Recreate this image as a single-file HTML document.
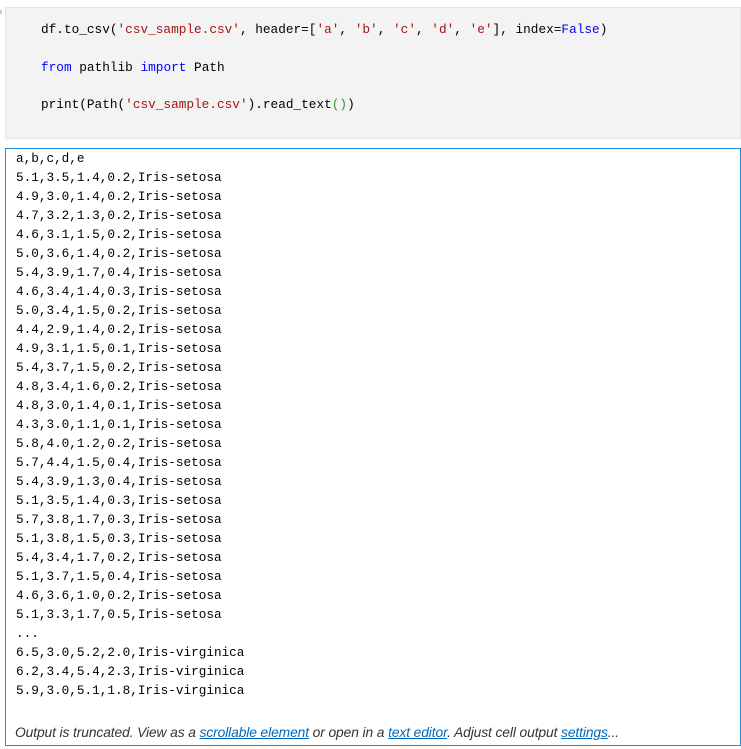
<!DOCTYPE html>
<html><head><style>
body{margin:0;background:#fff;width:741px;height:749px;overflow:hidden;position:relative;font-family:"Liberation Sans",sans-serif}
.cell{position:absolute;left:5px;top:7px;width:736px;height:132px;background:#f3f3f3;border:1px solid #e5e5e5;box-sizing:border-box}
.code{position:absolute;left:35px;font-family:"Liberation Mono",monospace;font-size:12.75px;color:#000;white-space:pre;line-height:16px}
.s{color:#a31515}.k{color:#0000ff}.p{color:#319331}
.out{position:absolute;left:5px;top:148px;width:736px;height:598px;border:1px solid #1a8fe0;box-sizing:border-box}
.txt{position:absolute;left:10px;top:0px;font-family:"Liberation Mono",monospace;font-size:12.7px;line-height:19px;white-space:pre;color:#000}
.foot{position:absolute;left:9px;top:576px;font-size:13.8px;font-style:italic;color:#333;white-space:nowrap;letter-spacing:-0.1px}
.foot a{color:#0067b8;text-decoration:underline}
.mark{position:absolute;left:0;top:10px;width:2px;height:4px;background:#ccc}
</style></head><body>
<div class="mark"></div>
<div class="cell">
<div class="code" style="top:14px">df.to_csv(<span class="s">'csv_sample.csv'</span>, header=[<span class="s">'a'</span>, <span class="s">'b'</span>, <span class="s">'c'</span>, <span class="s">'d'</span>, <span class="s">'e'</span>], index=<span class="k">False</span>)</div>
<div class="code" style="top:52px"><span class="k">from</span> pathlib <span class="k">import</span> Path</div>
<div class="code" style="top:89px">print(Path(<span class="s">'csv_sample.csv'</span>).read_text<span class="p">()</span>)</div>
</div>
<div class="out">
<div class="txt">a,b,c,d,e
5.1,3.5,1.4,0.2,Iris-setosa
4.9,3.0,1.4,0.2,Iris-setosa
4.7,3.2,1.3,0.2,Iris-setosa
4.6,3.1,1.5,0.2,Iris-setosa
5.0,3.6,1.4,0.2,Iris-setosa
5.4,3.9,1.7,0.4,Iris-setosa
4.6,3.4,1.4,0.3,Iris-setosa
5.0,3.4,1.5,0.2,Iris-setosa
4.4,2.9,1.4,0.2,Iris-setosa
4.9,3.1,1.5,0.1,Iris-setosa
5.4,3.7,1.5,0.2,Iris-setosa
4.8,3.4,1.6,0.2,Iris-setosa
4.8,3.0,1.4,0.1,Iris-setosa
4.3,3.0,1.1,0.1,Iris-setosa
5.8,4.0,1.2,0.2,Iris-setosa
5.7,4.4,1.5,0.4,Iris-setosa
5.4,3.9,1.3,0.4,Iris-setosa
5.1,3.5,1.4,0.3,Iris-setosa
5.7,3.8,1.7,0.3,Iris-setosa
5.1,3.8,1.5,0.3,Iris-setosa
5.4,3.4,1.7,0.2,Iris-setosa
5.1,3.7,1.5,0.4,Iris-setosa
4.6,3.6,1.0,0.2,Iris-setosa
5.1,3.3,1.7,0.5,Iris-setosa
...
6.5,3.0,5.2,2.0,Iris-virginica
6.2,3.4,5.4,2.3,Iris-virginica
5.9,3.0,5.1,1.8,Iris-virginica</div>
<div class="foot">Output is truncated. View as a <a>scrollable element</a> or open in a <a>text editor</a>. Adjust cell output <a>settings</a>...</div>
</div>
</body></html>
